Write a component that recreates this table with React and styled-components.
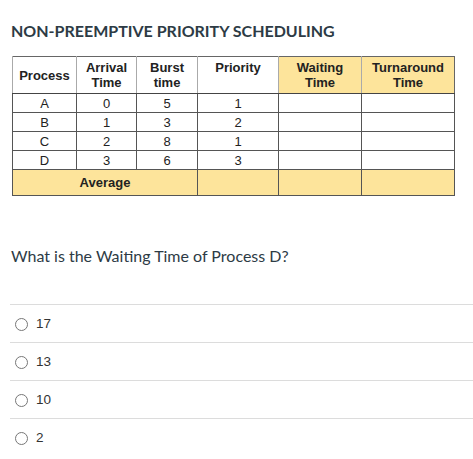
import React from 'react';
import styled, { createGlobalStyle } from 'styled-components';

const GlobalStyle = createGlobalStyle`
  body {
    margin: 0;
    background: #fff;
    font-family: Lato, "Liberation Sans", sans-serif;
  }
`;

const Page = styled.div`
  padding: 20px 0 0 10px;
`;

const Title = styled.h2`
  margin: 0 0 0 1px;
  font-size: 16px;
  line-height: 22px;
  font-weight: 700;
  color: #2d3b45;
`;

const Table = styled.table`
  margin: 14px 0 0 2px;
  border-collapse: collapse;
  table-layout: fixed;
  width: 443px;
  font-family: "Liberation Sans", Arial, sans-serif;
  font-size: 13px;
  color: #222;
  border: 1px solid #666;
`;

const Th = styled.th`
  height: 33px;
  padding: 0;
  font-weight: 700;
  line-height: 15px;
  text-align: center;
  vertical-align: ${(p) => (p.$top ? 'top' : 'middle')};
  padding-top: ${(p) => (p.$top ? '3px' : '0')};
  border-left: 1px solid #aaa;
  border-bottom: 1px solid #444;
  background: ${(p) => (p.$yellow ? '#fde49b' : '#fff')};
`;

const Td = styled.td`
  height: 18px;
  padding: 0;
  line-height: 15px;
  text-align: center;
  border: 1px solid #555;
  background: ${(p) => (p.$yellow ? '#fde49b' : '#fff')};
  font-weight: ${(p) => (p.$bold ? 700 : 400)};
`;

const AvgRow = styled.tr`
  td {
    height: 25px;
    background: #fde49b;
  }
`;

const Question = styled.p`
  margin: 49px 0 0 1px;
  font-size: 16px;
  line-height: 22px;
  color: #2d3b45;
`;

const Options = styled.div`
  margin-top: 37px;
`;

const Option = styled.label`
  display: flex;
  align-items: center;
  gap: 8px;
  height: 37px;
  padding-left: 5px;
  border-top: 1px solid #dcdcdc;
  font-family: "Liberation Sans", Arial, sans-serif;
  font-size: 13.5px;
  color: #333;
`;

const Radio = styled.span`
  box-sizing: border-box;
  width: 13px;
  height: 13px;
  border: 1px solid #777;
  border-radius: 50%;
  margin-top: 1px;
`;

const widths = [64, 60, 61, 81, 83, 93];

const rows = [
  ['A', 0, 5, 1],
  ['B', 1, 3, 2],
  ['C', 2, 8, 1],
  ['D', 3, 6, 3],
];

export default function App() {
  return (
    <Page>
      <GlobalStyle />
      <Title>NON-PREEMPTIVE PRIORITY SCHEDULING</Title>
      <Table>
        <colgroup>
          {widths.map((w, i) => (
            <col key={i} style={{ width: w }} />
          ))}
        </colgroup>
        <thead>
          <tr>
            <Th>Process</Th>
            <Th>Arrival<br />Time</Th>
            <Th>Burst<br />time</Th>
            <Th $top>Priority</Th>
            <Th $yellow>Waiting<br />Time</Th>
            <Th $yellow>Turnaround<br />Time</Th>
          </tr>
        </thead>
        <tbody>
          {rows.map((r) => (
            <tr key={r[0]}>
              {r.map((c, i) => (
                <Td key={i}>{c}</Td>
              ))}
              <Td />
              <Td />
            </tr>
          ))}
          <AvgRow>
            <Td colSpan={3} $bold>Average</Td>
            <Td />
            <Td />
            <Td />
          </AvgRow>
        </tbody>
      </Table>
      <Question>What is the Waiting Time of Process D?</Question>
      <Options>
        {['17', '13', '10', '2'].map((o) => (
          <Option key={o}>
            <Radio />
            {o}
          </Option>
        ))}
      </Options>
    </Page>
  );
}
